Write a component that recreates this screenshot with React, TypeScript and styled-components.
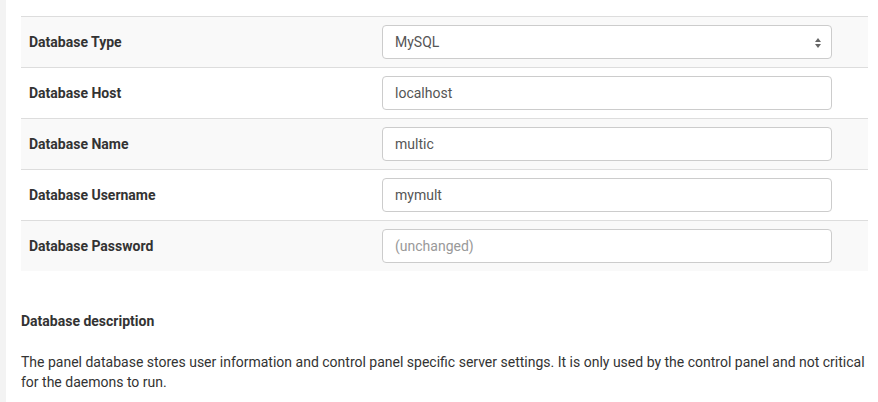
import React from "react";
import styled, { createGlobalStyle } from "styled-components";

const GlobalStyle = createGlobalStyle`
  html, body {
    margin: 0;
    padding: 0;
    background: #fff;
  }
  body {
    font-family: Roboto, "Liberation Sans", Arial, sans-serif;
    font-size: 14px;
    line-height: 20px;
    color: #333;
  }
`;

const Page = styled.div`
  display: flex;
  min-height: 402px;
`;

const SideEdge = styled.div`
  width: 6px;
  flex: none;
  background: #f3f3f3;
`;

const Main = styled.div`
  flex: 1;
  padding: 16px 10px 0 15px;
`;

const Table = styled.div`
  border-top: 1px solid #ddd;
`;

const Row = styled.div<{ $striped: boolean }>`
  display: grid;
  grid-template-columns: 353px 466px 1fr;
  align-items: center;
  background: ${(p) => (p.$striped ? "#f9f9f9" : "#fff")};
  & + & {
    border-top: 1px solid #ddd;
  }
`;

const Label = styled.div`
  padding: 8px;
  font-weight: bold;
  color: #333;
`;

const Cell = styled.div`
  padding: 8px;
`;

const Field = styled.div`
  position: relative;
  height: 34px;
  box-sizing: border-box;
  border: 1px solid #ccc;
  border-radius: 4px;
  background: #fff;
  display: flex;
  align-items: center;
  padding: 0 12px;
`;

const Value = styled.span<{ $placeholder?: boolean }>`
  color: ${(p) => (p.$placeholder ? "#999" : "#555")};
  font-size: 14px;
`;

const Arrows = styled.svg`
  position: absolute;
  right: 9px;
  top: 11px;
`;

const Heading = styled.div`
  margin-top: 40px;
  font-weight: bold;
  color: #333;
`;

const Text = styled.p`
  margin: 21px 0 0;
  color: #333;
`;

const rows = [
  { label: "Database Type", value: "MySQL", select: true },
  { label: "Database Host", value: "localhost" },
  { label: "Database Name", value: "multic" },
  { label: "Database Username", value: "mymult" },
  { label: "Database Password", value: "(unchanged)", placeholder: true },
];

export default function App() {
  return (
    <Page>
      <GlobalStyle />
      <SideEdge />
      <Main>
        <Table>
          {rows.map((r, i) => (
            <Row key={r.label} $striped={i % 2 === 0}>
              <Label>{r.label}</Label>
              <Cell>
                <Field>
                  <Value $placeholder={r.placeholder}>{r.value}</Value>
                  {r.select && (
                    <Arrows width="8" height="12" viewBox="0 0 8 12">
                      <path d="M4 1 L7 5 H1 Z" fill="#666" />
                      <path d="M4 11 L7 7 H1 Z" fill="#666" />
                    </Arrows>
                  )}
                </Field>
              </Cell>
              <div />
            </Row>
          ))}
        </Table>
        <Heading>Database description</Heading>
        <Text>
          The panel database stores user information and control panel specific
          server settings. It is only used by the control panel and not critical
          for the daemons to run.
        </Text>
      </Main>
    </Page>
  );
}
